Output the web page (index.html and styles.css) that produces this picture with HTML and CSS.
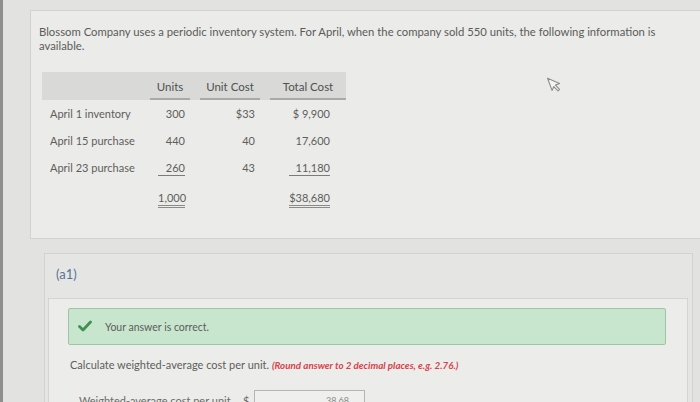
FILE: index.html
```html
<!DOCTYPE html>
<html>
<head>
<meta charset="utf-8">
<link rel="stylesheet" href="styles.css">
</head>
<body>
<div class="screen">
  <section class="card intro">
    <p class="lead">Blossom Company uses a periodic inventory system. For April, when the company sold 550 units, the following information is available.</p>
    <div class="inv">
      <div class="hd"></div>
      <div class="hd"><span class="hl">Units</span></div>
      <div class="hd"><span class="hl">Unit Cost</span></div>
      <div class="hd"><span class="hl">Total Cost</span></div>

      <div class="lbl">April 1 inventory</div>
      <div class="num n1">300</div>
      <div class="num n2">$33</div>
      <div class="num n3">$ 9,900</div>

      <div class="lbl">April 15 purchase</div>
      <div class="num n1">440</div>
      <div class="num n2">40</div>
      <div class="num n3">17,600</div>

      <div class="lbl">April 23 purchase</div>
      <div class="num n1"><span class="sl u1">260</span></div>
      <div class="num n2">43</div>
      <div class="num n3"><span class="sl u3">11,180</span></div>

      <div class="lbl tot"></div>
      <div class="num n1 tot"><span class="dl u1">1,000</span></div>
      <div class="num n2 tot"></div>
      <div class="num n3 tot"><span class="dl u3">$38,680</span></div>
    </div>
  </section>

  <section class="card part">
    <div class="part-head">(a1)</div>
    <div class="part-body">
      <div class="ok">
        <svg class="check" width="14" height="12" viewBox="0 0 14 12"><path d="M1.5 6.5 L5 10 L12.5 2" fill="none" stroke="#3f9150" stroke-width="2.8" stroke-linecap="round" stroke-linejoin="round"/></svg>
        <span>Your answer is correct.</span>
      </div>
      <p class="ask">Calculate weighted-average cost per unit. <em>(Round answer to 2 decimal places, e.g. 2.76.)</em></p>
      <div class="field">
        <span class="flbl">Weighted-average cost per unit</span>
        <span class="cur">$</span>
        <span class="box">38.68</span>
      </div>
    </div>
  </section>

  <svg class="pointer" width="14" height="20" viewBox="0 0 14 20"><path d="M2 2 L2 15 L5 12 L7.5 17.5 L9.5 16.6 L7 11.2 L11.5 11 Z" fill="#f4f4f2" stroke="#8d8e8b" stroke-width="1.1" stroke-linejoin="round"/></svg>
</div>
</body>
</html>
```

FILE: styles.css
```css
* { box-sizing: border-box; }
html, body { margin: 0; padding: 0; }
body {
  background: #e2e3e0;
  font-family: Lato, "Open Sans", sans-serif;
  color: #5d5e5c;
  width: 700px;
  height: 402px;
  overflow: hidden;
}
.screen {
  position: relative;
  height: 402px;
  border-left: 3px solid #8f908d;
  padding: 10px 0 0 27px;
}
.card {
  background: #ebebe9;
  border: 1px solid #d2d3d0;
}
.intro {
  width: 672px;
  height: 229px;
  padding: 14px 0 0 8px;
}
.lead {
  margin: 0;
  width: 630px;
  font-size: 11.3px;
  line-height: 14px;
  color: #5a5b59;
}
.inv {
  margin: 19px 0 0 3px;
  display: grid;
  grid-template-columns: 108px 40px 70px 86px;
  width: 304px;
  font-size: 11px;
}
.hd {
  background: #d9dad7;
  height: 28px;
  display: flex;
  align-items: flex-end;
}
.hl {
  display: block;
  width: 100%;
  height: 27px;
  line-height: 27px;
  text-align: center;
  border-bottom: 2px solid #a9aaa7;
  color: #4f504e;
  font-size: 11.5px;
}
.hd:nth-child(3) .hl, .hd:nth-child(4) .hl { margin-left: 10px; }
.lbl {
  height: 27px;
  line-height: 27px;
  padding-left: 8px;
  color: #5d5e5c;
  font-size: 11px;
}
.num {
  height: 27px;
  line-height: 27px;
  text-align: right;
  color: #5d5e5c;
}
.n1 { padding-right: 5px; }
.n2 { padding-right: 5px; }
.n3 { padding-right: 16px; }
.tot { height: 30px; line-height: 30px; padding-top: 4px; }
.num.tot { line-height: 26px; }
.sl, .dl {
  display: inline-block;
  line-height: 14px;
  text-align: right;
}
.sl { border-bottom: 1.5px solid #7b7c7a; }
.dl { border-bottom: 3px double #8a8b88; }
.u1 { width: 27px; }
.u3 { width: 41px; }

.part {
  margin: 14px 0 0 14px;
  width: 649px;
  height: 160px;
  background: #e5e6e3;
  padding: 0 4px 0 3px;
}
.part-head {
  height: 44px;
  padding: 12px 0 0 8px;
  font-size: 13px;
  color: #5a7298;
}
.part-body {
  background: #ecedea;
  border: 1px solid #d4d5d2;
  border-bottom: none;
  height: 120px;
  padding: 9px 0 0 19px;
}
.ok {
  width: 598px;
  height: 37px;
  background: #c8e5cd;
  border: 1px solid #9fc4a5;
  border-radius: 2px;
  display: flex;
  align-items: center;
  padding-left: 9px;
  font-size: 10.5px;
  color: #5b5d60;
}
.check { margin-right: 13px; margin-top: -2px; }
.ask {
  margin: 13px 0 0 2px;
  font-size: 11px;
  line-height: 14px;
  color: #5d5e5c;
}
.ask em {
  font-style: italic;
  font-weight: 700;
  color: #d8414a;
  font-size: 9.8px;
}
.field {
  margin: 18px 0 0 11px;
  display: flex;
  align-items: flex-start;
  font-size: 11px;
  color: #6a6b69;
}
.flbl { padding-top: 4px; width: 164px; }
.cur { padding-top: 4px; width: 11px; }
.box {
  width: 111px;
  height: 22px;
  background: #efefed;
  border: 1px solid #b5b6b3;
  text-align: right;
  padding: 4px 15px 0 0;
  color: #8a8b88;
  font-size: 9px;
}
.pointer {
  position: absolute;
  left: 545px;
  top: 74px;
  transform: rotate(-20deg);
}
```
